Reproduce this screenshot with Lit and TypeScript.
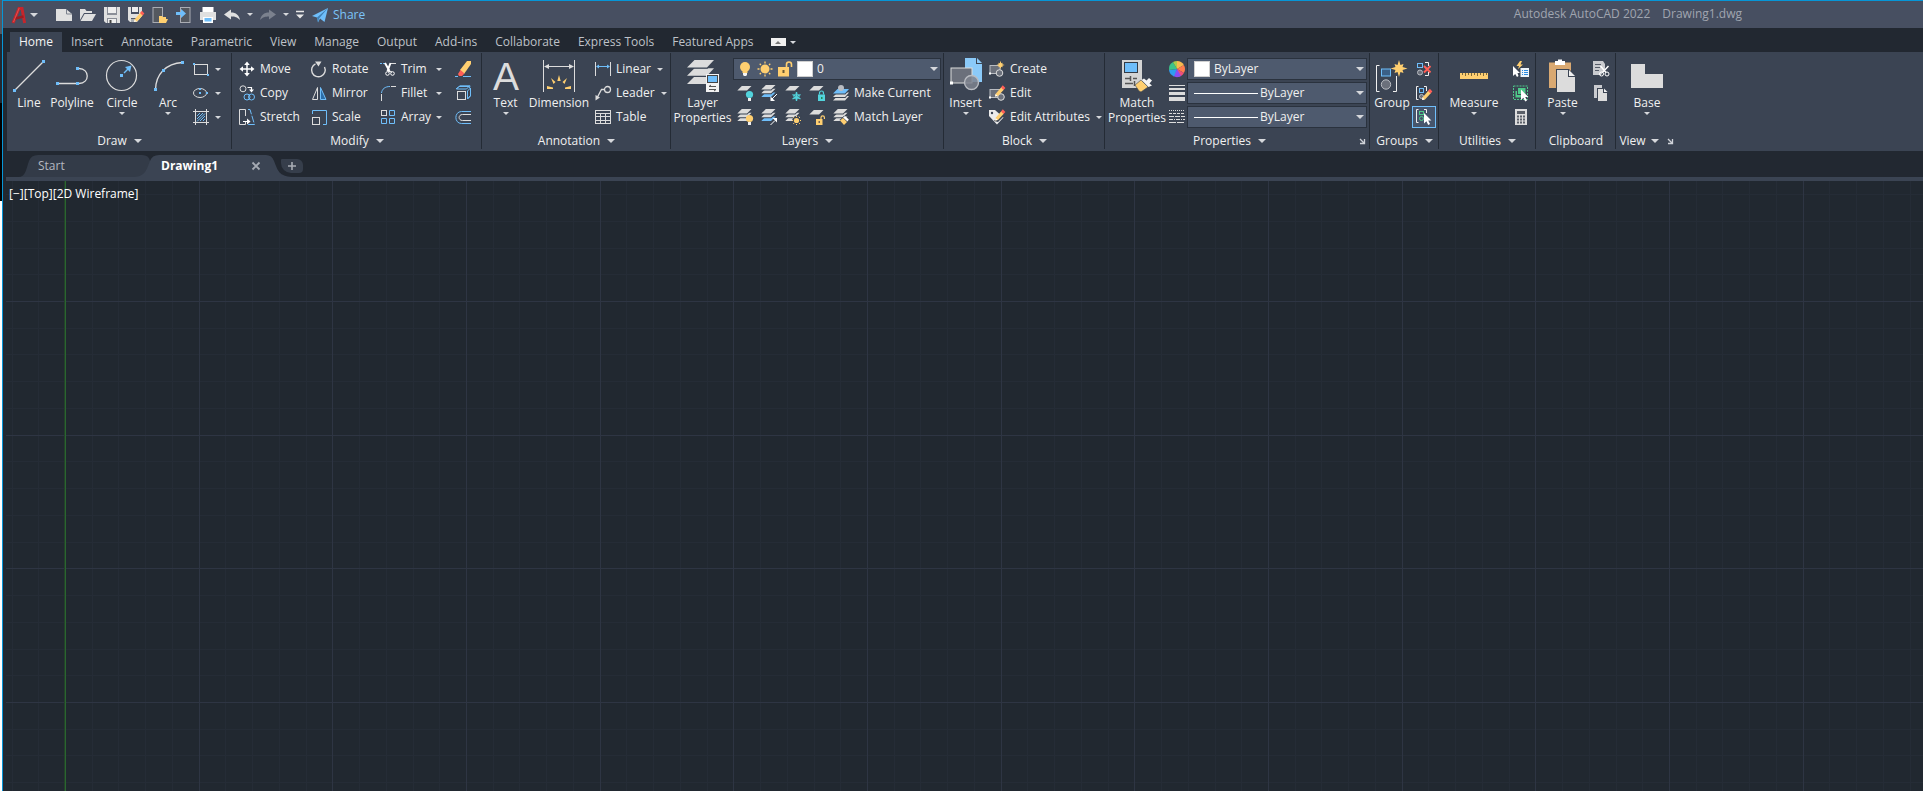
import { LitElement, html, svg, css, nothing, TemplateResult, SVGTemplateResult } from "lit";
import { customElement, property, state } from "lit/decorators.js";
import { classMap } from "lit/directives/class-map.js";

const G = "#dcdcdc";
const B = "#6fbefa";
const Y = "#ffcf70";
const C = "#52d3dc";
const R = "#ff5f57";
const N = "#4fc98a";
const K = "#3b4453";
const M = "#6b707b";

type Pic = SVGTemplateResult;

const dot = (x: number, y: number) => svg`<rect x=${x - 1.5} y=${y - 1.5} width="3" height="3" fill=${B}/>`;

const star = (cx: number, cy: number, r: number) => {
  const pts: string[] = [];
  for (let i = 0; i < 16; i++) {
    const rad = i % 2 ? r * 0.45 : i % 4 ? r * 0.75 : r;
    const a = (i * Math.PI) / 8;
    pts.push(`${(cx + rad * Math.sin(a)).toFixed(2)},${(cy - rad * Math.cos(a)).toFixed(2)}`);
  }
  return svg`<polygon points=${pts.join(" ")} fill=${Y}/>`;
};

const pencil = svg`<path d="M6.5 12.5L12.5 5.5L15 8L9 14.5L6 15Z" fill=${Y}/><path d="M12 6l1.8-2.2 2.6 2.6-1.9 2.1z" fill=${R}/><path d="M6 15l.6-2.6 2 2z" fill="#fff"/>`;
const cursor = svg`<path d="M8 4V14.5L10.4 12.3L12.2 16L14 15L12.2 11.6H15.4Z" fill="#fff"/>`;
const plane = (y: number, fill = G) => svg`<path d=${`M4.8 ${y}H14.5L10 ${y + 4.6}H0.3Z`} fill=${fill}/>`;
const sheet = (y: number, fill = G) => svg`<path d=${`M4.8 ${y}H14.5L10 ${y + 4.6}H0.3Z`} fill=${fill} stroke=${K} stroke-width="1.800" paint-order="stroke"/>`;
const stack = (low = G) => svg`${sheet(7.4, low)}${sheet(3.7)}${sheet(0)}`;

const ART: Record<string, Pic> = {
  logo: svg`<path d="M2 16L8 1.5H11L13.6 16" fill="none" stroke="#c5262c" stroke-width="3"/><path d="M4 11.5L12.5 9.5" stroke="#9c1d22" stroke-width="2.4"/><path d="M8.2 1L2.5 15" stroke="#e2514f" stroke-width="1"/>`,
  create: svg`<path d="M0 2H10L16 7V14H0Z" fill="#e0e0e0"/><path d="M10.500 2V7H16" fill="none" stroke="#7c828e"/>`,
  open: svg`<path d="M0 13V2H5L6.500 4H12V6H4Z" fill="#e0e0e0"/><path d="M4.500 7H16L12 14H0.500Z" fill="#e0e0e0"/>`,
  save: svg`<path d="M0 0H16V16H2L0 14Z" fill="#8b8f98"/><path d="M0 0H3V8H13V0H16V16H13V11H3V16H2L0 14Z" fill="#e0e0e0"/><rect x="4" y="0" width="8" height="6" fill="#eee"/><rect x="4" y="12" width="8" height="4" fill="#eee"/><rect x="5.500" y="13" width="2" height="3" fill="#444"/>`,
  saveas: svg`<path d="M0 0H3V7H11V0H14V9L9 15H2L0 13Z" fill="#e0e0e0"/><rect x="4" y="0" width="6" height="5" fill="#eee"/><path d="M3 11h5v4h-5z" fill="#555c68"/><path d="M4 12v3M6 12v3" stroke="#fff"/>${pencil}`,
  mobopen: svg`<rect x="1" y="0.500" width="9.500" height="15" fill="#54585f" stroke="#a9acb3"/><path d="M7 16V9H10L11 10H14V12H16L14 16Z" fill=${Y}/>`,
  mobsave: svg`<rect x="4.500" y="0.500" width="9.500" height="15" fill="#54585f" stroke="#a9acb3"/><path d="M0 5H5V2L10 6.500L5 11V8H0Z" fill=${B}/>`,
  print: svg`<rect x="2.500" y="0" width="11" height="5" fill="#fff"/><path d="M0 5H16V13H13V10H3V13H0Z" fill="#e0e0e0"/><rect x="3" y="10" width="10" height="6" fill="#fff"/><rect x="4.500" y="11" width="7" height="3.500" fill=${B}/>`,
  undo: svg`<path d="M0 7.500L7 2.500V5.500C12 5.500 15 8 16 13C13 10 11 9.500 7 9.500V12.500Z" fill="#e0e0e0"/>`,
  redo: svg`<path d="M16 7.500L9 2.500V5.500C4 5.500 1 8 0 13C3 10 5 9.500 9 9.500V12.500Z" fill="#7b818e"/>`,
  custom: svg`<path d="M4 4.500H12" stroke="#e8e8e8" stroke-width="1.500"/><path d="M4 7.500H12L8 11.500Z" fill="#e8e8e8"/>`,
  share: svg`<path d="M0 9L16 1L12.500 15L8 11.500L6 15.500L5 10.500Z" fill=${B}/><path d="M5 10.500L16 1L7 11.500L6 15.500Z" fill="#3f7fb4"/>`,

  line: svg`<path d="M1.500 30.500L30.500 1.500" stroke=${G} stroke-width="1.300"/>${dot(1.5, 30.5)}${dot(30.5, 1.5)}`,
  polyline: svg`<path d="M1.500 23.500H20M23 8.500C34 8.500 34 23.500 23 23.500" fill="none" stroke=${G} stroke-width="1.300"/>${dot(1.5, 23.5)}${dot(21.5, 23.5)}${dot(21.5, 8.5)}`,
  circle: svg`<circle cx="15.500" cy="15.500" r="15" fill="none" stroke=${G} stroke-width="1.200"/>${dot(15.5, 15.5)}<path d="M18 13L22 9" stroke=${B} stroke-width="1.500"/><path d="M25.500 5.500L24 12L19 7Z" fill=${B}/>`,
  arc: svg`<path d="M3.500 29.500C4 14 14 3.500 30.500 2.500" fill="none" stroke=${G} stroke-width="1.300"/>${dot(3.5, 29.5)}${dot(11.5, 10.5)}${dot(30.5, 2.5)}`,
  rect: svg`<rect x="1.500" y="3.500" width="13" height="10" fill="none" stroke=${G}/><rect x="0" y="2" width="2" height="2" fill=${B}/><rect x="14" y="13" width="2" height="2" fill=${B}/>`,
  ellipse: svg`<ellipse cx="7" cy="8" rx="6.500" ry="4.500" fill="none" stroke=${G}/><rect x="6" y="7" width="2" height="2" fill=${B}/><rect x="6" y="3" width="2" height="2" fill=${B}/><rect x="13" y="7" width="2" height="2" fill=${B}/>`,
  hatch: svg`<path d="M2.500 0V16M13.500 0V16M0 2.500H16M0 13.500H16" stroke=${G}/><path d="M4 7L7 4M4 10L10 4M4 12.500L12 4.500M7 12L12 7M10 12L12 10" stroke=${B}/>`,

  move: svg`<path d="M8 2V14M2 8H14" stroke="#fff" stroke-width="1.500"/><path d="M8 0.500L10.800 4H5.200ZM8 15.500L10.800 12H5.200ZM0.500 8L4 5.200V10.800ZM15.500 8L12 5.200V10.800Z" fill="#fff"/>`,
  copy: svg`<circle cx="4" cy="3.800" r="3" fill="none" stroke=${G}/><path d="M8.500 2.500H12.500V5" fill="none" stroke="#fff" stroke-width="1.200"/><path d="M10 4.500H15L12.500 7.500Z" fill="#fff"/><circle cx="8" cy="12" r="3" fill="none" stroke=${B}/><circle cx="12.500" cy="12" r="3" fill="none" stroke=${B}/>`,
  stretch: svg`<path d="M6.500 7V0.500H0.500V15.500H6.500V13" fill="none" stroke=${G}/><path d="M4 12.500H9" stroke="#fff"/><path d="M8 9.500L11.500 12.500L8 15.500Z" fill="#fff"/><path d="M9 0.500H11L15.500 15.500H8" fill="none" stroke=${B} stroke-dasharray="7 1.500"/>`,
  rotate: svg`<path d="M4.500 2.800A6.800 6.800 0 1 0 13.500 6" fill="none" stroke=${G} stroke-width="1.400"/><path d="M4 0.500H10.500L7.500 5.500Z" fill=${G}/>`,
  mirror: svg`<path d="M6.500 2.500V14.500H1.500Z" fill="none" stroke=${G}/><path d="M9.500 2.500V14.500H15Z" fill="#2c6ea8" stroke=${B}/>`,
  scale: svg`<path d="M1.500 5V1.500H15.500V15.500H12" fill="none" stroke=${B}/><rect x="1.500" y="8.500" width="7" height="7" fill="none" stroke=${G}/>`,
  trim: svg`<path d="M0 2.500H6" stroke=${B} stroke-dasharray="2 1"/><path d="M10 2.500H16" stroke=${G}/><path d="M5 2L9.500 10M10.500 2L7.500 10" stroke="#fff" stroke-width="2"/><circle cx="7.500" cy="12.500" r="1.800" fill="none" stroke="#fff"/><circle cx="12.500" cy="12.500" r="1.800" fill="none" stroke="#fff"/><path d="M7.500 10L12 11" stroke="#fff"/>`,
  fillet: svg`<path d="M1.500 9V16M11 1.500H16" stroke=${G}/><path d="M1.500 8C2 4 5 1.500 10 1.500" fill="none" stroke=${B}/>`,
  array: svg`<rect x="1.500" y="1.500" width="5" height="5" fill="none" stroke=${G}/><path d="M9.500 1.500h5v5h-5zM1.500 9.500h5v5h-5zM9.500 9.500h5v5h-5z" fill="none" stroke=${B}/>`,
  erase: svg`<path d="M0 15.500H3M8 15.500H16" stroke=${B}/><path d="M5 9L12 0H16V3L9 13Z" fill=${Y}/><path d="M5.500 9L9.500 12.500L7 15H4L3 13Z" fill=${R}/>`,
  explode: svg`<path d="M1 4L5 0.800H15L14.500 3M15.500 4V11L12.500 14M1.500 4L4 1.500H14L11.500 4Z" fill="none" stroke=${B}/><rect x="2.500" y="6.500" width="8" height="8" fill="none" stroke=${G}/><path d="M12.500 6V14L15.500 10.500V3Z" fill="none" stroke=${B}/>`,
  offset: svg`<path d="M16 2.500H6.500C-1 2.500-1 14.500 6.500 14.500H16" fill="none" stroke=${B}/><path d="M16 5.500H7.500C3 5.500 3 11.500 7.500 11.500H16" fill="none" stroke=${G}/>`,

  text: svg`<text x="16" y="30" text-anchor="middle" font-family="Liberation Sans" font-size="39" fill=${G}>A</text>`,
  dimension: svg`<path d="M0.500 0V32M31.500 0V32M2 6.500H30" stroke=${G}/><path d="M1 6.500L6 4V9ZM31 6.500L26 4V9Z" fill=${G}/><path d="M16 15l1.700 6h-3.400zM8 18l4.500 4-2 2zM24 18l-4.500 4 2 2zM4 26l6 1.500v1.500h-6zM28 26l-6 1.500v1.500h6z" fill=${Y}/>`,
  linear: svg`<path d="M0.500 1V15M15.500 1V15" stroke=${G}/><path d="M2 5.500H14" stroke=${B}/><path d="M1 5.500L4 3.500V7.500ZM15 5.500L12 3.500V7.500Z" fill=${B}/>`,
  leader: svg`<circle cx="12.500" cy="4.500" r="3" fill="none" stroke=${G} stroke-width="1.300"/><path d="M9.500 4.500H6.500L2.500 12" fill="none" stroke=${G} stroke-width="1.300"/><path d="M0.500 15.500V10L5 12.500Z" fill=${G}/>`,
  table: svg`<rect x="0.500" y="1.500" width="15" height="13" fill="none" stroke=${G}/><path d="M0 4.500H16M0 7.500H16M0 11.500H16M5.500 4V14M10.500 4V14" stroke=${G}/>`,

  layers: svg`<g fill=${G} stroke=${K} stroke-width="2.600" paint-order="stroke"><path d="M7.500 16.500H27L20 24H0Z"/><path d="M7.500 8.300H27L20 15.800H0Z"/><path d="M7.500 0H27L20 7.500H0Z"/></g><rect x="19" y="14" width="13" height="18" fill="#f2f2f2"/><rect x="20.500" y="15.500" width="10" height="7" fill=${B} stroke="#444" /><path d="M22 26.500H29M22 29.500H29M24 25L22 26.500M27 31L29 29.500" stroke="#555"/>`,
  bulb: svg`<circle cx="8" cy="6" r="5" fill=${Y}/><path d="M5.500 9.500H10.500V12H5.500Z" fill=${Y}/><path d="M6 12H10V14L9 15H7L6 14Z" fill="#f4f4f4"/>`,
  sun: svg`<circle cx="8" cy="8" r="4.500" fill=${Y}/><path d="M8 0.500V2.500M8 13.500V15.500M0.500 8H2.500M13.500 8H15.500M2.700 2.700L4 4M12 12L13.300 13.300M2.700 13.300L4 12M12 4L13.300 2.700" stroke=${Y} stroke-width="1.300"/>`,
  unlock: svg`<rect x="1" y="6" width="11" height="9.500" fill=${Y}/><path d="M9.500 6V3.500A2.500 2.500 0 0 1 14.500 3.500V6" fill="none" stroke=${Y} stroke-width="1.600"/><rect x="5.500" y="9" width="2" height="3" fill="#6b5a35"/>`,
  loff: svg`${plane(1)}<circle cx="12.500" cy="9.500" r="3.600" fill=${C}/><rect x="11" y="13" width="3" height="3" fill="#eee"/>`,
  liso: svg`${stack(B)}<path d="M16 9L11 14" stroke="#fff"/><path d="M9.500 16V11.500L14 16Z" fill="#fff"/>`,
  lfreeze: svg`${plane(1)}<path d="M11.500 7V16M7.500 9.500L15.500 14M15.500 9.500L7.500 14" stroke=${C} stroke-width="1.400"/><circle cx="11.500" cy="11.500" r="2.600" fill="none" stroke=${C}/>`,
  llock: svg`${plane(1)}<rect x="9" y="9.500" width="7" height="6.500" fill=${C}/><path d="M10.500 9.500V8A2 2 0 0 1 14.500 8V9.500" fill="none" stroke=${C} stroke-width="1.200"/><rect x="12" y="12" width="1.500" height="2" fill="#285"/>`,
  lmake: svg`<g stroke=${K} stroke-width="1.800" paint-order="stroke"><path d="M4.500 11H16L12 15.600H0Z" fill=${G}/><path d="M4.500 7.500H16L12 12H0Z" fill=${G}/><path d="M4.500 4H16L12 8.500H0Z" fill=${B}/></g><circle cx="8" cy="3" r="3" fill="#b9bcc2"/>`,
  lon: svg`${stack()}<circle cx="12.500" cy="9.500" r="3.600" fill=${Y}/><rect x="11" y="13" width="3" height="3" fill="#eee"/>`,
  luniso: svg`${stack(B)}<path d="M9.500 16L14 11.500" stroke="#fff"/><path d="M16 9V13.500L11.500 9Z" fill="#fff"/>`,
  lthaw: svg`${stack()}<circle cx="11.500" cy="11.500" r="4.400" fill=${K}/><circle cx="11.500" cy="11.500" r="2.600" fill=${Y}/><path d="M11.500 7V8M11.500 15V16M7 11.500H8M15 11.500H16M8.300 8.300l.9.900M14 14l.9.900M8.300 14.900l.9-.9M14 9l.9-.9" stroke=${Y}/>`,
  lunlock: svg`${plane(1)}<rect x="7" y="10" width="6.500" height="6" fill=${Y}/><path d="M12 10V8.500A1.700 1.700 0 0 1 15.400 8.500V10" fill="none" stroke=${Y} stroke-width="1.200"/><rect x="9.500" y="12" width="1.500" height="2" fill="#765"/>`,
  lmatch: svg`${stack()}<path d="M6.500 11L11 7L16 12L12 16Z" fill=${K}/><path d="M10 8.500L12 7L15.800 10.500L14.500 12.500Z" fill="#fff"/><path d="M7 11.500L10 9L14 13L11 16Z" fill=${Y}/>`,

  insert: svg`<path d="M15-2H26V4H32V22H15Z" fill="#8bcaf9"/><path d="M27-2L32 3H27Z" fill="#8bcaf9"/><rect x="1" y="8" width="21" height="15" fill=${M} stroke=${G}/><circle cx="21.500" cy="22.500" r="7" fill="#7e838e" fill-opacity=".85" stroke="#b9bcc2" stroke-width="1.400"/><rect x="0" y="21.500" width="3" height="3" fill="#fff"/>`,
  bcreate: svg`<rect x="1" y="4.500" width="10" height="8" fill=${M} stroke="#b9bcc2"/><circle cx="10.500" cy="12" r="3.300" fill=${M} stroke=${G}/><rect x="0" y="11.500" width="2" height="2" fill="#fff"/>${star(11.5, 4, 4.2)}`,
  bedit: svg`<rect x="1" y="4.500" width="10" height="8" fill=${M} stroke="#b9bcc2"/><circle cx="12" cy="12" r="3.300" fill=${M} stroke=${G}/><rect x="0" y="11.500" width="2" height="2" fill="#fff"/><g transform="translate(0 -3.500)">${pencil}</g>`,
  battr: svg`<path d="M0 1H6L14.500 8.500L8 15.500L0 7Z" fill="#ececec"/><circle cx="3" cy="4" r="1.200" fill=${K}/><path d="M5 12L12.500 3L16 6L9 13Z" fill=${K}/><g transform="translate(0 -3.500)">${pencil}</g>`,

  match: svg`<rect x="1" y="0" width="20" height="28" fill="#d4d4d4"/><rect x="3.500" y="2.500" width="13" height="10" fill=${B} stroke="#333b46"/><path d="M4 18.500H10M12 18.500H16M4 23.500H12" stroke="#555" stroke-width="1.300"/><path d="M9.500 16V21M13.500 21V26" stroke="#555" stroke-width="1.500"/><path d="M14 25L20 20L27 27L20 32L18 31Z" fill=${Y} stroke=${K} stroke-width=".6"/><path d="M20.500 20L23 18.500L25.500 20.500L28 18L31 20.500L28.500 23.500L31 25.500L27.500 27Z" fill="#f4f4f4"/>`,
  wheel: svg`<path d="M8 8L8 0A8 8 0 0 1 14.900 4Z" fill="#f8b84e"/><path d="M8 8L14.900 4A8 8 0 0 1 14.900 12Z" fill="#ff7d4d"/><path d="M8 8L14.900 12A8 8 0 0 1 8 16Z" fill="#f05078"/><path d="M8 8L12 15A8 8 0 0 1 4 15Z" fill="#8a4df5"/><path d="M8 8L5 15.400A8 8 0 0 1 0 9Z" fill="#2f9df0"/><path d="M8 8L0 9A8 8 0 0 1 4 1.100Z" fill="#3cc38a"/><path d="M8 8L4 1.100A8 8 0 0 1 8 0Z" fill="#a8cc4a"/>`,
  weights: svg`<path d="M0 0.500H16" stroke=${G}/><path d="M0 4H16" stroke=${G} stroke-width="2"/><path d="M0 8.500H16" stroke=${G} stroke-width="3"/><path d="M0 14H16" stroke=${G} stroke-width="4"/>`,
  types: svg`<path d="M0 1.500H16" stroke=${G} stroke-dasharray="1 1"/><path d="M0 4.500H16" stroke=${G} stroke-dasharray="3 1"/><path d="M0 7.500H16" stroke=${G} stroke-dasharray="5 1"/><path d="M0 10.500H16" stroke=${G} stroke-dasharray="4 1 1 1"/><path d="M0 13.500H16" stroke=${G} stroke-dasharray="7 1"/>`,

  group: svg`<path d="M3.500 5.500H0.500V31.500H3.500M17 31.500H20.500V16" fill="none" stroke="#f0f0f0"/><rect x="5.500" y="9" width="9" height="7" fill="#3a5f86" stroke=${B}/><circle cx="10" cy="24.500" r="4.700" fill=${M} stroke="#b9bcc2"/>${star(23, 8.5, 8.5)}`,
  ungroup: svg`<path d="M9 1.500H12.500V5M12.500 11V14.500H9" fill="none" stroke="#f0f0f0"/><rect x="1.500" y="2.500" width="5" height="4" fill="none" stroke=${B}/><circle cx="4" cy="11.500" r="2.500" fill=${M} stroke="#b9bcc2"/><path d="M8 5L14.500 11.500M14.500 5L8 11.500" stroke=${R} stroke-width="2"/>`,
  gedit: svg`<path d="M2.500 1.500H0.500V14.500H2.500M8 1.500H10.500V6" fill="none" stroke="#f0f0f0"/><rect x="3.500" y="3.500" width="4" height="4" fill="none" stroke=${B}/><circle cx="5.500" cy="11.500" r="2" fill=${M} stroke="#b9bcc2"/>${pencil}`,
  gsel: svg`<path d="M2.500 0.500H0.500V13.500H2.500M8 0.500H10.500V4" fill="none" stroke="#f0f0f0"/><rect x="3.500" y="2.500" width="4" height="3" fill="none" stroke=${N}/><circle cx="5.500" cy="9.500" r="2" fill="none" stroke=${N}/>${cursor}`,

  measure: svg`<rect x="2" y="13" width="28" height="6" fill=${Y}/><path d="M4.500 13v2M7.500 13v3M10.500 13v2M13.500 13v3M16.500 13v2M19.500 13v3M22.500 13v2M25.500 13v3M28.500 13v2" stroke="#7d6a3c"/>`,
  qselect: svg`<path d="M0 5V15L2.200 13L4 16L5.500 15L4.500 12H7Z" fill="#fff"/><path d="M7 0L3.500 5H6L5 8L10 3.500H7.500L9 0Z" fill=${Y}/><rect x="7.500" y="7" width="8.500" height="9" fill="#eef4fa"/><path d="M9 9.500h1M11 9.500h4M9 11.500h1M11 11.500h4M9 13.500h1M11 13.500h4" stroke="#2c8be0"/>`,
  selall: svg`<rect x="0.500" y="1" width="14" height="13.500" fill="none" stroke=${N} stroke-dasharray="2 1"/><path d="M2.500 6H4V10H8V12.500H2.500Z" fill=${N}/><rect x="5" y="3" width="7.500" height="6" fill=${N}/><g transform="translate(0 .5)">${cursor}</g>`,
  calc: svg`<rect x="2" y="0" width="12" height="16" fill=${G}/><rect x="4" y="2" width="8" height="3" fill="#5a5f68"/><path d="M4 7.500H12M4 10.500H12M4 13.500H12" stroke="#5a5f68" stroke-width="2" stroke-dasharray="2 1"/>`,
  paste: svg`<rect x="2" y="2.500" width="22" height="25.500" fill="#d9a972"/><path d="M8 1H11V-.5H15V1H18V5H8Z" fill="#fff"/><path d="M9 9H22L28.500 16V32.500H9Z" fill=${K}/><path d="M10 10H21V17H28V32H10Z" fill=${G}/><path d="M22 10L28 16H22Z" fill="#f0f0f0"/>`,
  cut: svg`<path d="M0 0H10L12 3V8L8 14H0Z" fill="#c9cbcf"/><path d="M2 3.500H8M2 6.500H7M2 9.500H6" stroke="#555c68"/><path d="M7.500 5L13 11.500M15.500 5L9.500 11.500" stroke="#fff" stroke-width="1.400"/><circle cx="8.500" cy="13" r="2" fill="none" stroke="#fff"/><circle cx="14" cy="13" r="2" fill="none" stroke="#fff"/>`,
  copyclip: svg`<path d="M1 0H9V3H4V13H1Z" fill="#c9cbcf"/><path d="M5 4H10V8H14V16H5Z" fill=${G}/><path d="M11 3.500L14.500 7H11Z" fill="#f0f0f0"/>`,
  base: svg`<path d="M0 4H14V14H32V28H0Z" fill=${G}/>`,
  launch: svg`<path d="M6 6L10 10M10.500 6V10.500H6" fill="none" stroke="#cfd2d8" stroke-width="1.300"/>`,
};

const icon = (name: string, size = 16) =>
  html`<svg class=${size === 32 ? "big-art" : "art"} viewBox=${`0 0 ${size} ${size}`} aria-hidden="true">${ART[name]}</svg>`;

const caret = (wide = false) =>
  html`<span class=${classMap({ caret: true, wide })} aria-hidden="true"></span>`;

const CSS_BASE = css`
  :host, * { box-sizing: border-box; }
  button, select, a {
    font: inherit; color: inherit; border: 0; padding: 0; margin: 0;
    background: none; white-space: nowrap; text-decoration: none;
  }
  svg { display: block; flex: none; overflow: visible; }
  .art { width: 16px; height: 16px; }
  .big-art { width: 32px; height: 32px; }
  .caret {
    flex: none; width: 0; height: 0;
    border: 3px solid transparent; border-bottom-width: 0; border-top-color: #d6d8dc;
  }
  .caret.wide { border-width: 4px 4px 0; }
`;

@customElement("title-bar")
class TitleBar extends LitElement {
  static styles = [CSS_BASE, css`
    :host {
      display: flex; align-items: center; height: 28px;
      background: #474f61; border-top: 1px solid #0696d7; color: #a0a5b0;
    }
    .menu { display: flex; align-items: center; gap: 3px; width: 41px; margin-left: 8px; }
    .tool { display: grid; place-items: center; width: 24px; height: 24px; }
    .drop { display: grid; place-items: center; width: 12px; height: 24px; }
    .share { display: flex; align-items: center; gap: 5px; color: #7cc4f8; margin-left: 8px; }
    .caption { margin: 0 181px 2px auto; display: flex; gap: 12px; }
  `];
  render() {
    const tool = (name: string, label: string) =>
      html`<button class="tool" aria-label=${label}>${icon(name)}</button>`;
    return html`
      <button class="menu" aria-label="Application menu">${icon("logo")}${caret(true)}</button>
      ${tool("create", "New")}${tool("open", "Open")}${tool("save", "Save")}${tool("saveas", "Save As")}
      ${tool("mobopen", "Open from Web & Mobile")}${tool("mobsave", "Save to Web & Mobile")}
      ${tool("print", "Plot")}${tool("undo", "Undo")}
      <button class="drop" aria-label="Undo history">${caret()}</button>
      ${tool("redo", "Redo")}
      <button class="drop" aria-label="Redo history">${caret()}</button>
      <button class="drop" aria-label="Customize Quick Access Toolbar">${icon("custom")}</button>
      <button class="share">${icon("share")}<span>Share</span></button>
      <div class="caption"><span>Autodesk AutoCAD 2022</span><span>Drawing1.dwg</span></div>
    `;
  }
}

@customElement("ribbon-tabs")
class RibbonTabs extends LitElement {
  @state() private active = "Home";
  static styles = [CSS_BASE, css`
    :host { display: flex; align-items: flex-end; height: 24px; padding-left: 7px; }
    .tab { height: 20px; padding: 0 9px; color: #bfc2c8; }
    .tab.on { background: #3b4453; color: #f4f4f4; }
    .mini { display: flex; align-items: center; gap: 4px; height: 20px; margin-left: 8px; }
    .plate { display: grid; place-items: center; width: 15px; height: 8px; background: #f0f0f0; }
    .up { width: 0; height: 0; border: 3px solid transparent; border-top-width: 0; border-bottom-color: #777; }
  `];
  private names = ["Home", "Insert", "Annotate", "Parametric", "View", "Manage", "Output",
    "Add-ins", "Collaborate", "Express Tools", "Featured Apps"];
  render() {
    return html`${this.names.map((n) => html`
      <button class=${classMap({ tab: true, on: n === this.active })} @click=${() => (this.active = n)}>${n}</button>`)}
      <button class="mini" aria-label="Minimize ribbon"><span class="plate"><span class="up"></span></span>${caret()}</button>`;
  }
}

@customElement("ribbon-panels")
class RibbonPanels extends LitElement {
  static styles = [CSS_BASE, css`
    :host { display: flex; height: 99px; margin-left: 4px; background: #3b4453; color: #f0f0f0; }
    .panel { flex: none; display: flex; flex-direction: column; padding-top: 5px; position: relative; }
    .panel::after { content: ""; position: absolute; right: 0; top: 1px; bottom: 2px; width: 1px; background: #242b35; }
    .panel.view::after { display: none; }
    .body { display: grid; grid-auto-flow: column; height: 72px; align-items: start; justify-content: start; }
    .foot { display: flex; align-items: center; height: 22px; padding-top: 1px; }
    .title { display: flex; align-items: center; justify-content: center; gap: 7px; flex: 1; }
    .launch { width: 16px; height: 16px; }

    .draw { width: 225px; }
    .draw .body { grid-template-columns: 36px 50px 50px 42px auto; padding-left: 4px; }
    .modify { width: 250px; }
    .modify .body { grid-template-columns: 72px 69px 62px auto; padding-left: 7px; }
    .annotation { width: 189px; }
    .annotation .body { grid-template-columns: 43px 64px auto; padding-left: 2px; }
    .layer { width: 273px; }
    .layer .body { grid-template-columns: 57px 208px; column-gap: 2px; padding-left: 3px; }
    .block { width: 161px; }
    .block .body { grid-template-columns: 39px auto; padding-left: 2px; }
    .properties { width: 265px; }
    .properties .body { grid-template-columns: 64px 18px 180px; }
    .groups { width: 69px; }
    .groups .body { grid-template-columns: 40px 24px; padding-left: 2px; }
    .utilities { width: 97px; }
    .utilities .body { grid-template-columns: 70px 20px; }
    .clipboard { width: 80px; }
    .clipboard .body { grid-template-columns: 53px 20px; }
    .view { width: 62px; }
    .view .body { grid-template-columns: 62px; }
    .view .title { gap: 5px; }

    .big { display: flex; flex-direction: column; align-items: center; padding-top: 3px; width: 100%; height: 72px; }
    .big span { line-height: 15px; }
    .big .label { margin-top: 3px; text-align: center; white-space: pre-line; }
    .big .caret { margin-top: 2px; }

    .col { display: flex; flex-direction: column; }
    .inset { padding-left: 4px; }
    .late { padding-left: 13px; }
    .small { display: flex; align-items: center; gap: 5px; height: 24px; }
    .small .caret { margin-left: 1px; }
    .spread .caret { margin-left: auto; }
    .row { display: flex; }
    .cell { display: grid; place-items: center; width: 24px; height: 24px; }
    .row .small { margin-left: 4px; }
    .on { height: 22px; margin-top: 1px; background: #46556c; outline: 1px solid #6fbefa; outline-offset: -1px; }

    .combo {
      display: flex; align-items: center; gap: 4px; height: 22px; margin: 1px 0;
      background: #4e5a6e; border: 1px solid #2a323e; padding: 0 3px 0 6px; position: relative;
    }
    .combo .caret { position: absolute; right: 2px; top: 8px; pointer-events: none; }
    .combo select { flex: 1; min-width: 0; appearance: none; outline: 0; height: 20px; }
    .combo option { color: #222; }
    .layers-combo { padding-left: 3px; }
    .swatch { flex: none; width: 16px; height: 16px; background: #fff; border: 1px solid #d0d0d0; }
    .rule { flex: none; width: 64px; height: 1px; background: #fff; }
    .tight { gap: 2px; }
  `];

  private big(name: string, label: string, drop = false) {
    return html`<button class="big">${icon(name, 32)}<span class="label">${label}</span>${drop ? caret() : nothing}</button>`;
  }
  private small(name: string, label: string, drop = false, hidden = false) {
    return html`<button class="small" aria-label=${label}>${icon(name)}${hidden ? nothing : html`<span>${label}</span>`}${drop ? caret() : nothing}</button>`;
  }
  private cell(name: string, label: string, on = false) {
    return html`<button class=${classMap({ cell: true, on })} aria-label=${label}>${icon(name)}</button>`;
  }
  private panel(cls: string, title: string, body: TemplateResult, drop = true, launch = false) {
    return html`<section class="panel ${cls}">
      <div class="body">${body}</div>
      <div class="foot">
        <button class="title">${title}${drop ? caret(true) : nothing}</button>
        ${launch ? html`<button class="launch" aria-label="${title} settings">${icon("launch")}</button>` : nothing}
      </div>
    </section>`;
  }

  render() {
    return html`
      ${this.panel("draw", "Draw", html`
        ${this.big("line", "Line")}${this.big("polyline", "Polyline")}${this.big("circle", "Circle", true)}${this.big("arc", "Arc", true)}
        <div class="col inset">
          ${this.small("rect", "Rectangle", true, true)}${this.small("ellipse", "Ellipse", true, true)}${this.small("hatch", "Hatch", true, true)}
        </div>`)}
      ${this.panel("modify", "Modify", html`
        <div class="col">${this.small("move", "Move")}${this.small("copy", "Copy")}${this.small("stretch", "Stretch")}</div>
        <div class="col">${this.small("rotate", "Rotate")}${this.small("mirror", "Mirror")}${this.small("scale", "Scale")}</div>
        <div class="col spread">${this.small("trim", "Trim", true)}${this.small("fillet", "Fillet", true)}${this.small("array", "Array", true)}</div>
        <div class="col late">${this.small("erase", "Erase", false, true)}${this.small("explode", "Explode", false, true)}${this.small("offset", "Offset", false, true)}</div>`)}
      ${this.panel("annotation", "Annotation", html`
        ${this.big("text", "Text", true)}${this.big("dimension", "Dimension")}
        <div class="col inset">${this.small("linear", "Linear", true)}${this.small("leader", "Leader", true)}${this.small("table", "Table")}</div>`)}
      ${this.panel("layer", "Layers", html`
        ${this.big("layers", "Layer\nProperties")}
        <div class="col">
          <div class="combo layers-combo">
            ${icon("bulb")}${icon("sun")}${icon("unlock")}<span class="swatch"></span>
            <select aria-label="Layer"><option>0</option></select>${caret(true)}
          </div>
          <div class="row">
            ${this.cell("loff", "Layer Off")}${this.cell("liso", "Isolate")}${this.cell("lfreeze", "Freeze")}${this.cell("llock", "Lock")}${this.small("lmake", "Make Current")}
          </div>
          <div class="row">
            ${this.cell("lon", "All On")}${this.cell("luniso", "Unisolate")}${this.cell("lthaw", "Thaw")}${this.cell("lunlock", "Unlock")}${this.small("lmatch", "Match Layer")}
          </div>
        </div>`)}
      ${this.panel("block", "Block", html`
        ${this.big("insert", "Insert", true)}
        <div class="col inset">${this.small("bcreate", "Create")}${this.small("bedit", "Edit")}${this.small("battr", "Edit Attributes", true)}</div>`)}
      ${this.panel("properties", "Properties", html`
        ${this.big("match", "Match\nProperties")}
        <div class="col">${this.small("wheel", "Object Color", false, true)}${this.small("weights", "Lineweight", false, true)}${this.small("types", "Linetype", false, true)}</div>
        <div class="col">
          <div class="combo"><span class="swatch"></span><select aria-label="Object Color"><option>ByLayer</option></select>${caret(true)}</div>
          <div class="combo tight"><span class="rule"></span><select aria-label="Lineweight"><option>ByLayer</option></select>${caret(true)}</div>
          <div class="combo tight"><span class="rule"></span><select aria-label="Linetype"><option>ByLayer</option></select>${caret(true)}</div>
        </div>`, true, true)}
      ${this.panel("groups", "Groups", html`
        ${this.big("group", "Group")}
        <div class="col">${this.cell("ungroup", "Ungroup")}${this.cell("gedit", "Group Edit")}${this.cell("gsel", "Group Selection", true)}</div>`)}
      ${this.panel("utilities", "Utilities", html`
        ${this.big("measure", "Measure", true)}
        <div class="col inset">${this.small("qselect", "Quick Select", false, true)}${this.small("selall", "Select All", false, true)}${this.small("calc", "Calculator", false, true)}</div>`)}
      ${this.panel("clipboard", "Clipboard", html`
        ${this.big("paste", "Paste", true)}
        <div class="col inset">${this.small("cut", "Cut", false, true)}${this.small("copyclip", "Copy Clip", false, true)}</div>`, false)}
      ${this.panel("view", "View", html`${this.big("base", "Base", true)}`, true, true)}
    `;
  }
}

@customElement("file-tabs")
class FileTabs extends LitElement {
  static styles = [CSS_BASE, css`
    :host {
      display: flex; align-items: flex-end; height: 30px; margin-left: 3px;
      padding-left: 12px; border-bottom: 4px solid #3b4453;
    }
    .tab { position: relative; display: flex; align-items: center; height: 22px; }
    .start { width: 114px; padding-left: 20px; color: #b4b8c0; }
    .current { width: 146px; padding-left: 29px; padding-right: 14px; justify-content: space-between; color: #fff; font-weight: 700; }
    .shape { position: absolute; left: 0; top: 0; z-index: 0; }
    .tab > :not(.shape) { position: relative; }
    .close, .plus { display: grid; place-items: center; width: 16px; height: 16px; }
    .plus { width: 22px; height: 14px; margin: 0 0 4px 3px; background: #363e4b; border-radius: 1px 6px 4px 10px; }
  `];
  render() {
    return html`
      <div class="tab start">
        <svg class="shape" width="134" height="22" aria-hidden="true"><path d="M0 22C8 22 8 14 11 6Q13 0 20 0H124Q131 0 132 6V22Z" fill="#333b48"/></svg>
        <button>Start</button>
      </div>
      <div class="tab current">
        <svg class="shape" width="160" height="22" aria-hidden="true"><path d="M0 22C13 22 14 16 18 6Q20 0 27 0H134Q140 0 142 6C146 16 147 21 160 22Z" fill="#3b4453"/></svg>
        <button>Drawing1</button>
        <button class="close" aria-label="Close Drawing1"><svg width="8" height="8"><path d="M0.500 0.500L7.500 7.500M7.500 0.500L0.500 7.500" stroke="#a6abb4" stroke-width="1.800"/></svg></button>
      </div>
      <button class="plus" aria-label="New drawing"><svg width="8" height="8"><path d="M4 0V8M0 4H8" stroke="#a9adb5" stroke-width="1.600"/></svg></button>
    `;
  }
}

@customElement("drawing-area")
class DrawingArea extends LitElement {
  @property({ type: Number }) tile = 401;
  static styles = [CSS_BASE, css`
    :host { position: relative; display: block; flex: 1; margin-left: 3px; background: #212830; overflow: hidden; }
    .grid { position: absolute; inset: 0; width: 100%; height: 100%; }
    .controls { position: relative; display: flex; padding: 5px 0 0 3px; color: #fff; }
  `];
  render() {
    const steps = Array.from({ length: 15 }, (_, i) => ({ at: Math.round((i * this.tile) / 15), major: i % 5 === 0 }));
    const ordered = [...steps.filter((s) => !s.major), ...steps.filter((s) => s.major)];
    return html`
      <svg class="grid" aria-hidden="true">
        <defs>
          <pattern id="mesh" x="59" y="120" width=${this.tile} height=${this.tile} patternUnits="userSpaceOnUse">
            ${ordered.map((s) => svg`
              <rect x=${s.at} y="0" width="1" height=${this.tile} fill=${s.major ? "#2e3543" : "#252c36"}/>
              <rect x="0" y=${s.at} width=${this.tile} height="1" fill=${s.major ? "#2e3543" : "#252c36"}/>`)}
          </pattern>
        </defs>
        <rect width="100%" height="100%" fill="url(#mesh)"/>
        <rect x="58" y="0" width="1" height="100%" fill="#24402b"/>
        <rect x="59" y="0" width="1" height="100%" fill="#2a662f"/>
      </svg>
      <div class="controls"><button>[−]</button><button>[Top]</button><button>[2D Wireframe]</button></div>
    `;
  }
}

@customElement("app-root")
class AppRoot extends LitElement {
  static styles = css`
    :host {
      display: flex; min-height: 100vh; background: #222831;
      font: 12px/16px "Open Sans", "Noto Sans", sans-serif;
    }
    .behind {
      flex: none; width: 2px;
      background: linear-gradient(#55575f 34px, #222831 34px 103px, #000 103px 201px, #fff 201px);
    }
    .window { flex: 1; min-width: 0; display: flex; flex-direction: column; border-left: 1px solid #0696d7; }
  `;
  render() {
    return html`
      <div class="behind"></div>
      <main class="window">
        <title-bar></title-bar>
        <ribbon-tabs></ribbon-tabs>
        <ribbon-panels></ribbon-panels>
        <file-tabs></file-tabs>
        <drawing-area></drawing-area>
      </main>
    `;
  }
}
